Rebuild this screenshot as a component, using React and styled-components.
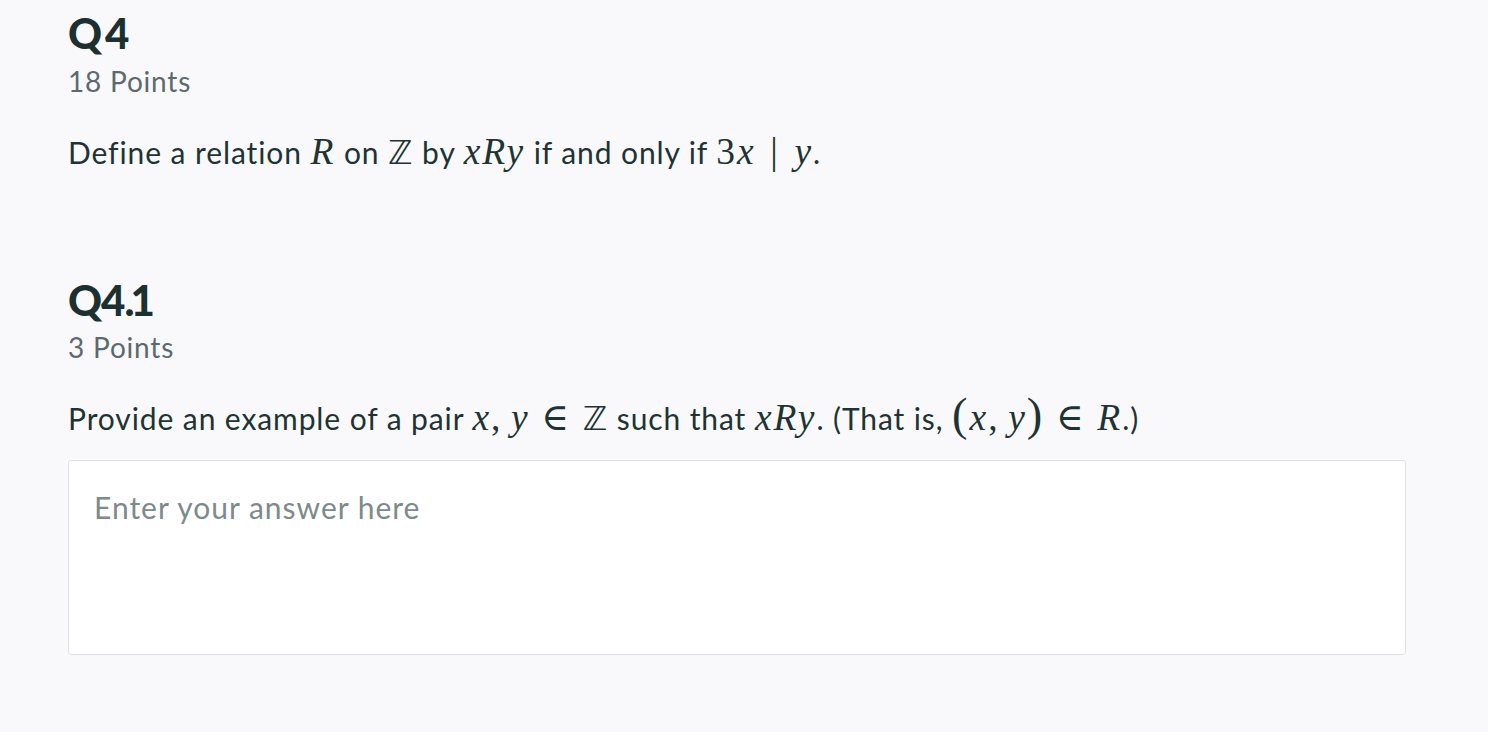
import React from "react";
import styled, { createGlobalStyle } from "styled-components";

const Global = createGlobalStyle`
  html, body { margin: 0; padding: 0; background: #f9f9fb; }
  body { font-family: Lato, "Open Sans", sans-serif; color: #1e3333; }
  * { box-sizing: border-box; }
`;

const Page = styled.main`
  padding: 8px 0 0 68px;
  width: 1406px;
`;

const Question = styled.section`
  display: flex;
  flex-direction: column;
  margin-bottom: ${(p) => p.$gap || 0}px;
`;

const Title = styled.h2`
  margin: 0;
  font-size: 42px;
  line-height: 1.2;
  font-weight: 900;
  color: #1d3030;
  letter-spacing: ${(p) => p.$ls ?? 0.5}px;
`;

const Dot = styled.span`
  letter-spacing: -4px;
`;

const Points = styled.div`
  margin-top: ${(p) => p.$mt ?? 7}px;
  font-size: 28px;
  line-height: 1.2;
  letter-spacing: 0.8px;
  color: #5b6a70;
`;

const Prompt = styled.p`
  margin: ${(p) => p.$mt ?? 35}px 0 0;
  font-size: 30px;
  line-height: 36px;
  height: 36px;
  letter-spacing: 0.9px;
  white-space: nowrap;
  color: #1e3333;
`;

const M = styled.span`
  font-family: "Liberation Serif", "DejaVu Serif", serif;
  font-style: ${(p) => (p.$up ? "normal" : "italic")};
  font-size: ${(p) => p.$size || 1.25}em;
  letter-spacing: 2px;
  line-height: 0;
  padding: 0 ${(p) => p.$pad || 0}px;
`;

const BB = styled.span`
  font-family: "DejaVu Sans", sans-serif;
  font-size: 1.1em;
  line-height: 0;
`;

const Answer = styled.textarea`
  display: block;
  margin-top: 24px;
  width: 1338px;
  height: 195px;
  padding: 28px 25px;
  border: 1px solid #dfe2e8;
  border-radius: 3px;
  background: #fff;
  font-family: Lato, "Open Sans", sans-serif;
  font-size: 30px;
  letter-spacing: 1px;
  line-height: 1.2;
  color: #1e3333;
  resize: none;
  outline: none;
  &::placeholder { color: #7d8a8b; }
`;

export default function App() {
  return (
    <>
      <Global />
      <Page>
        <Question $gap={105}>
          <Title $ls={3}>Q4</Title>
          <Points>18 Points</Points>
          <Prompt>
            Define a relation <M>R</M> on <BB>ℤ</BB> by <M>xRy</M> if and only if{" "}
            <M $up>3</M><M>x</M> <M $up $pad={6}>|</M> <M>y</M>.
          </Prompt>
        </Question>
        <Question>
          <Title $ls={-1}>Q4<Dot>.</Dot>1</Title>
          <Points $mt={6}>3 Points</Points>
          <Prompt $mt={35}>
            Provide an example of a pair <M>x</M><M $up>,</M> <M>y</M> <M $up $pad={3}>∈</M> <BB>ℤ</BB> such that{" "}
            <M>xRy</M>. (That is, <M $up $size={1.55}>(</M><M>x</M><M $up>,</M> <M>y</M><M $up $size={1.55}>)</M>{" "}
            <M $up $pad={3}>∈</M> <M>R</M>.)
          </Prompt>
          <Answer placeholder="Enter your answer here" />
        </Question>
      </Page>
    </>
  );
}
